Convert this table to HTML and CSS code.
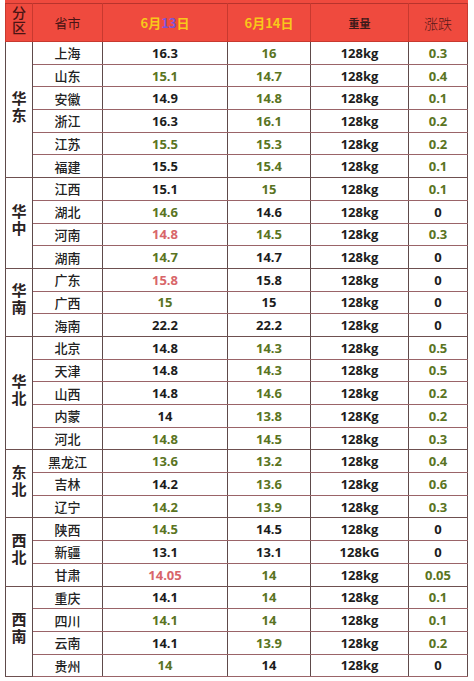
FILE: index.html
```html
<!DOCTYPE html>
<html lang="zh">
<head>
<meta charset="utf-8">
<link rel="stylesheet" href="styles.css">
</head>
<body>
<div class="wrap">
<div class="band"></div>
<table class="price">
<colgroup>
<col class="c-reg"><col class="c-prov"><col class="c-d13"><col class="c-d14"><col class="c-wt"><col class="c-chg">
</colgroup>
<thead>
<tr>
<th class="h-reg"><span class="vert">分区</span></th>
<th class="h-prov">省市</th>
<th class="h-date">6月<span class="purple">13</span>日</th>
<th class="h-date">6月14日</th>
<th class="h-wt">重量</th>
<th class="h-chg">涨跌</th>
</tr>
</thead>
<tbody>
<tr><td class="reg" rowspan="6"><span class="vert">华东</span></td><td class="prov">上海</td><td class="n">16.3</td><td class="n g">16</td><td class="w">128kg</td><td class="n g">0.3</td></tr>
<tr><td class="prov">山东</td><td class="n g">15.1</td><td class="n g">14.7</td><td class="w">128kg</td><td class="n g">0.4</td></tr>
<tr><td class="prov">安徽</td><td class="n">14.9</td><td class="n g">14.8</td><td class="w">128kg</td><td class="n g">0.1</td></tr>
<tr><td class="prov">浙江</td><td class="n">16.3</td><td class="n g">16.1</td><td class="w">128kg</td><td class="n g">0.2</td></tr>
<tr><td class="prov">江苏</td><td class="n g">15.5</td><td class="n g">15.3</td><td class="w">128kg</td><td class="n g">0.2</td></tr>
<tr class="end"><td class="prov">福建</td><td class="n">15.5</td><td class="n g">15.4</td><td class="w">128kg</td><td class="n g">0.1</td></tr>

<tr><td class="reg" rowspan="4"><span class="vert">华中</span></td><td class="prov">江西</td><td class="n">15.1</td><td class="n g">15</td><td class="w">128kg</td><td class="n g">0.1</td></tr>
<tr><td class="prov">湖北</td><td class="n g">14.6</td><td class="n">14.6</td><td class="w">128kg</td><td class="n">0</td></tr>
<tr><td class="prov">河南</td><td class="n r">14.8</td><td class="n g">14.5</td><td class="w">128kg</td><td class="n g">0.3</td></tr>
<tr class="end"><td class="prov">湖南</td><td class="n g">14.7</td><td class="n">14.7</td><td class="w">128kg</td><td class="n">0</td></tr>

<tr><td class="reg" rowspan="3"><span class="vert">华南</span></td><td class="prov">广东</td><td class="n r">15.8</td><td class="n">15.8</td><td class="w">128kg</td><td class="n">0</td></tr>
<tr><td class="prov">广西</td><td class="n g">15</td><td class="n">15</td><td class="w">128kg</td><td class="n">0</td></tr>
<tr class="end"><td class="prov">海南</td><td class="n">22.2</td><td class="n">22.2</td><td class="w">128kg</td><td class="n">0</td></tr>

<tr><td class="reg" rowspan="5"><span class="vert">华北</span></td><td class="prov">北京</td><td class="n">14.8</td><td class="n g">14.3</td><td class="w">128kg</td><td class="n g">0.5</td></tr>
<tr><td class="prov">天津</td><td class="n">14.8</td><td class="n g">14.3</td><td class="w">128kg</td><td class="n g">0.5</td></tr>
<tr><td class="prov">山西</td><td class="n">14.8</td><td class="n g">14.6</td><td class="w">128kg</td><td class="n g">0.2</td></tr>
<tr><td class="prov">内蒙</td><td class="n">14</td><td class="n g">13.8</td><td class="w">128Kg</td><td class="n g">0.2</td></tr>
<tr class="end"><td class="prov">河北</td><td class="n g">14.8</td><td class="n g">14.5</td><td class="w">128kg</td><td class="n g">0.3</td></tr>

<tr><td class="reg" rowspan="3"><span class="vert">东北</span></td><td class="prov">黑龙江</td><td class="n g">13.6</td><td class="n g">13.2</td><td class="w">128kg</td><td class="n g">0.4</td></tr>
<tr><td class="prov">吉林</td><td class="n">14.2</td><td class="n g">13.6</td><td class="w">128kg</td><td class="n g">0.6</td></tr>
<tr class="end"><td class="prov">辽宁</td><td class="n g">14.2</td><td class="n g">13.9</td><td class="w">128kg</td><td class="n g">0.3</td></tr>

<tr><td class="reg" rowspan="3"><span class="vert">西北</span></td><td class="prov">陕西</td><td class="n g">14.5</td><td class="n">14.5</td><td class="w">128kg</td><td class="n">0</td></tr>
<tr><td class="prov">新疆</td><td class="n">13.1</td><td class="n">13.1</td><td class="w">128kG</td><td class="n">0</td></tr>
<tr class="end"><td class="prov">甘肃</td><td class="n r">14.05</td><td class="n g">14</td><td class="w">128kg</td><td class="n g">0.05</td></tr>

<tr><td class="reg" rowspan="4"><span class="vert">西南</span></td><td class="prov">重庆</td><td class="n">14.1</td><td class="n g">14</td><td class="w">128kg</td><td class="n g">0.1</td></tr>
<tr><td class="prov">四川</td><td class="n g">14.1</td><td class="n g">14</td><td class="w">128kg</td><td class="n g">0.1</td></tr>
<tr><td class="prov">云南</td><td class="n">14.1</td><td class="n g">13.9</td><td class="w">128kg</td><td class="n g">0.2</td></tr>
<tr><td class="prov">贵州</td><td class="n g">14</td><td class="n">14</td><td class="w">128kg</td><td class="n">0</td></tr>
</tbody>
</table>
</div>
</body>
</html>
```
FILE: styles.css
```css
html, body {
  margin: 0;
  padding: 0;
  background: #ffffff;
}
.wrap {
  padding: 0 0 0 5px;
  width: 463px;
}
.band {
  height: 3px;
  background: #ef4a3e;
}
.price {
  border-collapse: collapse;
  table-layout: fixed;
  width: 463px;
  font-family: "Noto Sans CJK SC", "Noto Sans", sans-serif;
  color: #1c1a1a;
}
.c-reg { width: 27px; }
.c-prov { width: 70px; }
.c-d13 { width: 125px; }
.c-d14 { width: 83px; }
.c-wt { width: 98px; }
.c-chg { width: 59px; }

.vert {
  display: inline-block;
  writing-mode: vertical-rl;
  text-orientation: upright;
  letter-spacing: 2px;
  line-height: 1;
}

.price th {
  height: 37px;
  padding: 0;
  background: #ef4a3e;
  border: 1px solid #c8392f;
  border-top-color: #b8332c;
  font-weight: 400;
  text-align: center;
  vertical-align: middle;
}
.h-reg {
  font-size: 14px;
  color: #4a1414;
}
.h-reg .vert {
  letter-spacing: 1px;
  font-weight: 500;
}
.h-prov {
  font-size: 13px;
  color: #4a1414;
}
.h-date {
  font-size: 13px;
  font-weight: 700 !important;
  color: #f8c81a;
}
.purple {
  color: #7b54d4;
}
.h-wt {
  font-size: 11px;
  font-weight: 700 !important;
  color: #3c1a1a;
}
.h-chg {
  font-size: 14px;
  color: #5a1a1a;
  font-weight: 300 !important;
}

.price td {
  height: 21.7px;
  padding: 0;
  text-align: center;
  vertical-align: middle;
  border-left: 1px solid #5e4a4a;
  border-right: 1px solid #5e4a4a;
  border-bottom: 1px solid #9a6468;
  border-top: 1px solid #9a6468;
  background: #ffffff;
}
.price td.reg {
  font-size: 15px;
  font-weight: 700;
  color: #2a2222;
  border-bottom-color: #6e5050;
}
.price tr.end td {
  border-bottom-color: #6e5050;
}
.prov {
  font-size: 13px;
  font-weight: 500;
  color: #222222;
}
.n, .w {
  font-family: "Open Sans", "Noto Sans", sans-serif;
  font-size: 13px;
  font-weight: 700;
  color: #1c1c1c;
}
.n.g {
  color: #5a7422;
}
.n.r {
  color: #d8666a;
}
```
